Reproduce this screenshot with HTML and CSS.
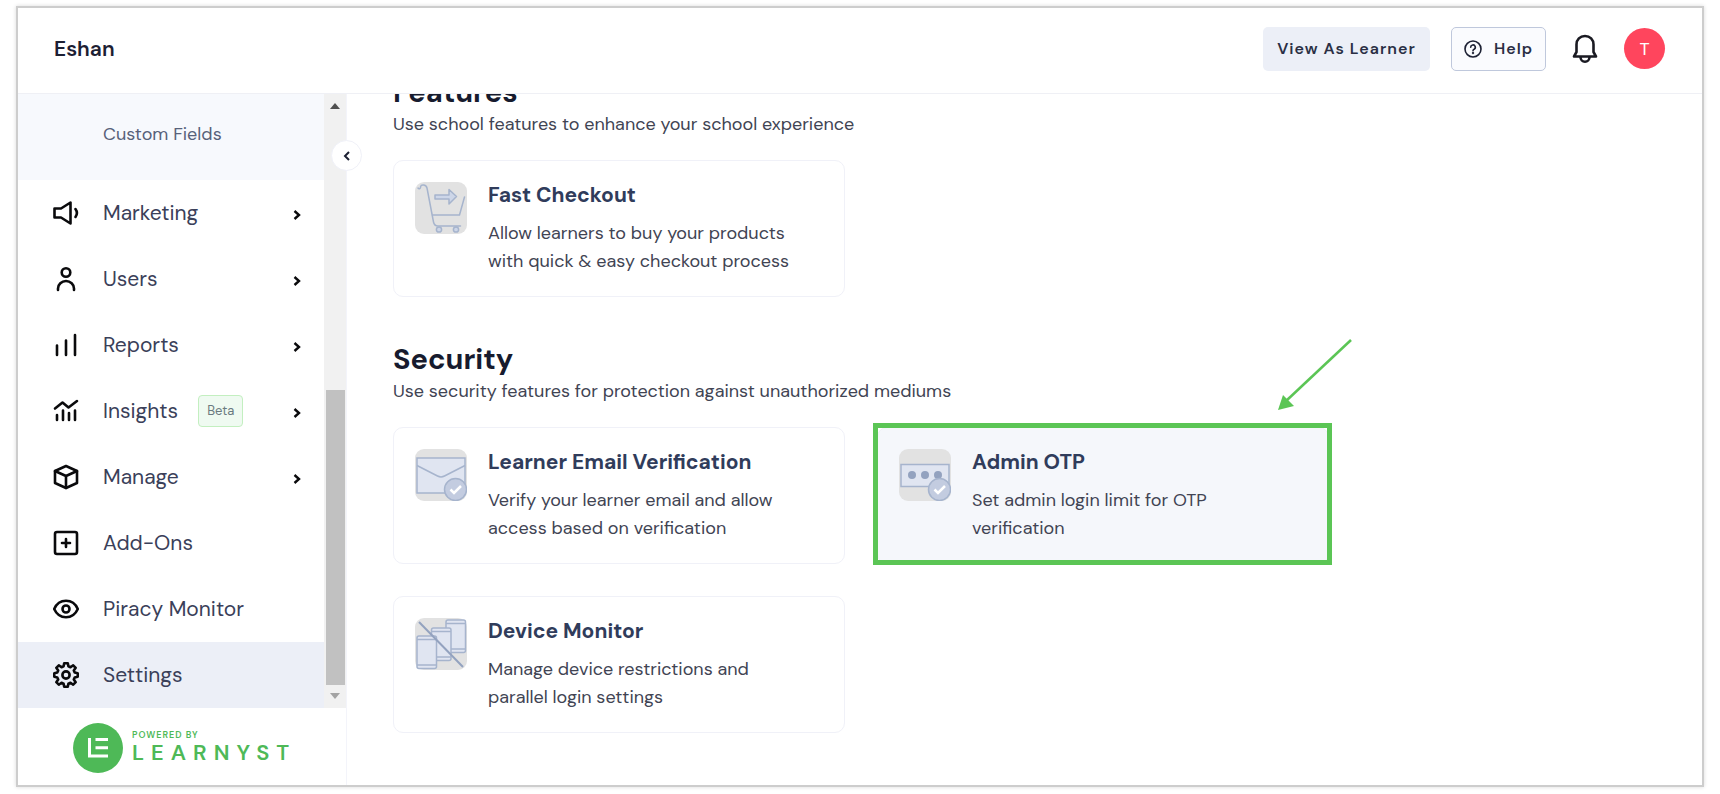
FILE: index.html
```html
<!DOCTYPE html>
<html lang="en">
<head>
    <meta charset="UTF-8">
    <meta name="viewport" content="width=device-width, initial-scale=1.0">
    <title>Settings - Learnyst</title>
    <link rel="stylesheet" href="styles.css">
</head>
<body>
    <div class="app">
        <!-- Top bar -->
        <header class="topbar">
            <div class="school-name">Eshan</div>
            <div class="topbar-actions">
                <button type="button" class="btn btn-view">View As Learner</button>
                <button type="button" class="btn btn-help">
                    <svg width="18" height="18" viewBox="0 0 18 18" fill="none" stroke="#1c2033" stroke-width="1.6" stroke-linecap="round">
                        <circle cx="9" cy="9" r="8"/>
                        <path d="M6.7 7.2a2.3 2.3 0 1 1 3.4 2c-.8.4-1.1.8-1.1 1.5"/>
                        <circle cx="9" cy="13" r=".4"/>
                    </svg>
                    Help
                </button>
                <button type="button" class="bell" aria-label="Notifications">
                    <svg width="26" height="30" viewBox="0 0 26 30" fill="none" stroke="#1a1a22" stroke-width="2.6" stroke-linejoin="round">
                        <path d="M13 2C8 2 4.500 5.500 4.500 10.500V18L2 22.500H24L21.500 18V10.500C21.500 5.500 18 2 13 2Z"/>
                        <path d="M8.500 23a4.500 4.800 0 0 0 9 0"/>
                    </svg>
                </button>
                <button type="button" class="avatar">T</button>
            </div>
        </header>

        <div class="layout">
            <!-- Sidebar -->
            <aside class="sidebar">
                <div class="sidebar-scroll">
                    <nav class="nav">
                        <a href="#" class="nav-sub">Custom Fields</a>
                        <a href="#" class="nav-item">
                            <svg class="nav-icon" viewBox="0 0 26 26">
                                <path d="M1.500 8.500H8L17.500 2.500V23.500L8 17.500H1.500Z"/>
                                <path d="M22.500 9c1.700 2.400 1.700 5.600 0 8"/>
                            </svg>
                            <span>Marketing</span>
                            <svg class="chevron" viewBox="0 0 8 10"><path d="M1.500 1L6 5L1.500 9"/></svg>
                        </a>
                        <a href="#" class="nav-item">
                            <svg class="nav-icon" viewBox="0 0 26 26">
                                <circle cx="13" cy="6.500" r="4.300"/>
                                <path d="M5 24v-1.500a8 7.500 0 0 1 16 0V24"/>
                            </svg>
                            <span>Users</span>
                            <svg class="chevron" viewBox="0 0 8 10"><path d="M1.500 1L6 5L1.500 9"/></svg>
                        </a>
                        <a href="#" class="nav-item">
                            <svg class="nav-icon" viewBox="0 0 26 26">
                                <path d="M4 13.500V23M13 8.500V23M22 3V23"/>
                            </svg>
                            <span>Reports</span>
                            <svg class="chevron" viewBox="0 0 8 10"><path d="M1.500 1L6 5L1.500 9"/></svg>
                        </a>
                        <a href="#" class="nav-item">
                            <svg class="nav-icon" viewBox="0 0 26 26">
                                <path d="M2 10.500L9.500 4.500L15.500 9.500L24 3"/>
                                <path d="M4 17V22M10 12.500V22M16 15V22M22 12.500V22"/>
                            </svg>
                            <span>Insights</span>
                            <span class="badge">Beta</span>
                            <svg class="chevron" viewBox="0 0 8 10"><path d="M1.500 1L6 5L1.500 9"/></svg>
                        </a>
                        <a href="#" class="nav-item">
                            <svg class="nav-icon" viewBox="0 0 26 26">
                                <path d="M13 2L24 7V19L13 24L2 19V7Z"/>
                                <path d="M2 7L13 12L24 7M13 12V24"/>
                            </svg>
                            <span>Manage</span>
                            <svg class="chevron" viewBox="0 0 8 10"><path d="M1.500 1L6 5L1.500 9"/></svg>
                        </a>
                        <a href="#" class="nav-item">
                            <svg class="nav-icon" viewBox="0 0 26 26">
                                <rect x="2" y="2" width="22" height="22" rx="2"/>
                                <path d="M13 9V17M9 13H17"/>
                            </svg>
                            <span>Add-Ons</span>
                        </a>
                        <a href="#" class="nav-item">
                            <svg class="nav-icon" viewBox="0 0 26 26">
                                <path d="M1.200 13C3.500 7.800 8 4.800 13 4.800S22.500 7.800 24.800 13C22.500 18.200 18 21.200 13 21.200S3.500 18.200 1.200 13Z"/>
                                <circle cx="13" cy="13" r="3.500"/>
                            </svg>
                            <span>Piracy Monitor</span>
                        </a>
                        <a href="#" class="nav-item active">
                            <svg class="nav-icon" viewBox="0 0 26 26">
                                <path d="M10.600 4.300L11.200 1.300H14.800L15.400 4.300L17.500 5.200L20.200 3.300L22.700 5.800L20.800 8.500L21.700 10.600L24.700 11.200V14.800L21.700 15.400L20.800 17.500L22.700 20.200L20.200 22.700L17.500 20.800L15.400 21.700L14.800 24.700H11.200L10.600 21.700L8.500 20.800L5.800 22.700L3.300 20.200L5.200 17.500L4.300 15.400L1.300 14.800V11.200L4.300 10.600L5.200 8.500L3.300 5.800L5.800 3.300L8.500 5.200Z"/>
                                <circle cx="13" cy="13" r="3.600"/>
                            </svg>
                            <span>Settings</span>
                        </a>
                    </nav>
                    <div class="scrollbar">
                        <svg width="10" height="6" viewBox="0 0 10 6"><path d="M5 0L10 6H0Z" fill="#505050"/></svg>
                        <div class="scroll-track"><div class="scroll-thumb"></div></div>
                        <svg width="10" height="6" viewBox="0 0 10 6"><path d="M0 0H10L5 6Z" fill="#a3a3a3"/></svg>
                    </div>
                </div>
                <button type="button" class="collapse" aria-label="Collapse menu">
                    <svg width="8" height="10" viewBox="0 0 8 10" fill="none" stroke="#1c2033" stroke-width="2"><path d="M6 1L2 5L6 9"/></svg>
                </button>
                <div class="powered">
                    <svg width="50" height="50" viewBox="0 0 50 50">
                        <circle cx="25" cy="25" r="25" fill="#4eb957"/>
                        <path d="M16.500 15V33H35M22.500 16.500H35M22.500 24.700H35" fill="none" stroke="#fff" stroke-width="3"/>
                    </svg>
                    <div class="powered-text">
                        <span class="powered-by">POWERED BY</span>
                        <span class="brand">LEARNYST</span>
                    </div>
                </div>
            </aside>

            <!-- Settings cards -->
            <main class="content">
                <section class="section">
                    <h2>Features</h2>
                    <p class="section-text">Use school features to enhance your school experience</p>
                    <div class="cards">
                        <a href="#" class="card">
                            <svg class="card-icon" viewBox="0 0 52 52">
                                <rect width="52" height="52" rx="9" fill="#e2e2e2"/>
                                <g fill="none" stroke="#a6b4cd" stroke-width="1.500" stroke-linecap="round" stroke-linejoin="round">
                                    <path d="M3 6C4 7.500 6 6.500 5.500 4.800C6 2.200 11 2.300 12 6L18.500 40C19 42.500 20.500 44 23 44H45.500"/>
                                    <path d="M17.500 33H44.500L49.500 15"/>
                                    <path d="M20 13H34V7.500L41.500 14.500L34 22V17H20Z" fill="#cdd6e8"/>
                                    <circle cx="24" cy="47.500" r="2.600" fill="#cdd6e8"/>
                                    <circle cx="41" cy="47.500" r="2.600" fill="#cdd6e8"/>
                                </g>
                            </svg>
                            <div class="card-body">
                                <h3>Fast Checkout</h3>
                                <p>Allow learners to buy your products<br>with quick &amp; easy checkout process</p>
                            </div>
                        </a>
                    </div>
                </section>

                <section class="section">
                    <h2>Security</h2>
                    <p class="section-text">Use security features for protection against unauthorized mediums</p>
                    <div class="cards">
                        <a href="#" class="card">
                            <svg class="card-icon" viewBox="0 0 52 52">
                                <rect width="52" height="52" rx="9" fill="#e2e2e2"/>
                                <g fill="#e0e5f1" stroke="#a6b4cd" stroke-width="1.500">
                                    <rect x="2" y="9" width="48" height="35"/>
                                    <path d="M2 16.500L22.500 27C25 28.300 27 28.300 29.500 27L50 16.500" fill="none"/>
                                    <circle cx="40.500" cy="40.500" r="11" fill="#c3cce0"/>
                                </g>
                                <path d="M35.500 40.500L39 44L46 37" fill="none" stroke="#fff" stroke-width="2.500"/>
                            </svg>
                            <div class="card-body">
                                <h3>Learner Email Verification</h3>
                                <p>Verify your learner email and allow<br>access based on verification</p>
                            </div>
                        </a>
                        <a href="#" class="card highlighted">
                            <svg class="card-icon" viewBox="0 0 52 52">
                                <rect width="52" height="52" rx="9" fill="#e2e2e2"/>
                                <rect x="2" y="15.500" width="48" height="22" fill="#e0e5f1" stroke="#a6b4cd" stroke-width="1.500"/>
                                <g fill="#93a2bf">
                                    <circle cx="13" cy="26" r="4"/>
                                    <circle cx="26" cy="26" r="4"/>
                                    <circle cx="39" cy="26" r="4"/>
                                </g>
                                <circle cx="40.500" cy="40.500" r="11" fill="#c3cce0" stroke="#a6b4cd" stroke-width="1.500"/>
                                <path d="M35.500 40.500L39 44L46 37" fill="none" stroke="#fff" stroke-width="2.500"/>
                            </svg>
                            <div class="card-body">
                                <h3>Admin OTP</h3>
                                <p>Set admin login limit for OTP<br>verification</p>
                            </div>
                            <svg class="arrow" width="76" height="74" viewBox="0 0 76 74">
                                <path d="M74 3L9 64" stroke="#5bc555" stroke-width="2.500"/>
                                <path d="M1 73L6 58L17 69Z" fill="#5bc555"/>
                            </svg>
                        </a>
                        <a href="#" class="card">
                            <svg class="card-icon" viewBox="0 0 52 52">
                                <rect width="52" height="52" rx="9" fill="#e2e2e2"/>
                                <g fill="#e0e5f1" stroke="#a6b4cd" stroke-width="1.500">
                                    <rect x="31" y="2" width="19.500" height="32.500" rx="2"/>
                                    <path d="M31 5.500H50.500M31 31H50.500"/>
                                    <rect x="16.500" y="10" width="19.500" height="32.500" rx="2"/>
                                    <path d="M16.500 13.500H36M16.500 39H36"/>
                                    <rect x="2" y="18" width="19.500" height="32.500" rx="2"/>
                                    <path d="M2 21.500H21.500M2 47H21.500"/>
                                </g>
                                <path d="M4 4L48 49" stroke="#93a2bf" stroke-width="2"/>
                            </svg>
                            <div class="card-body">
                                <h3>Device Monitor</h3>
                                <p>Manage device restrictions and<br>parallel login settings</p>
                            </div>
                        </a>
                    </div>
                </section>
            </main>
        </div>
    </div>
</body>
</html>
```
FILE: styles.css
```css
* {
    margin: 0;
    padding: 0;
    box-sizing: border-box;
}

body {
    font-family: 'DM Sans', Inter, sans-serif;
    font-optical-sizing: none;
    background: #fff;
    color: #414453;
    padding: 6px 16px;
}

a {
    color: inherit;
    text-decoration: none;
}

button {
    font-family: inherit;
    cursor: pointer;
}

.app {
    border: 2px solid #cdcdcd;
    box-shadow: 0 0 4px rgba(0, 0, 0, 0.15);
}

/* Top bar */
.topbar {
    display: flex;
    align-items: center;
    justify-content: space-between;
    height: 86px;
    padding: 0 37px 4px 36px;
    border-bottom: 1px solid #eff0f5;
}

.school-name {
    font-size: 21px;
    font-weight: 600;
    color: #1c2033;
}

.topbar-actions {
    display: flex;
    align-items: center;
    gap: 26px;
}

.btn {
    display: flex;
    align-items: center;
    justify-content: center;
    height: 44px;
    border-radius: 5px;
    font-size: 16px;
    font-weight: 600;
    letter-spacing: 1px;
    color: #2a2f45;
}

.btn-view {
    width: 167px;
    margin-right: -5px;
    border: none;
    background: #eceff7;
}

.btn-help {
    width: 95px;
    gap: 12px;
    border: 1px solid #bfc8dc;
    background: #fafbfe;
}

.bell {
    display: flex;
    border: none;
    background: none;
}

.avatar {
    width: 41px;
    height: 41px;
    border: none;
    border-radius: 50%;
    background: #ff455d;
    color: #fff;
    font-size: 18px;
}

.layout {
    display: flex;
}

/* Sidebar */
.sidebar {
    position: relative;
    flex: none;
    width: 329px;
    border-right: 1px solid #f3f4fa;
}

.sidebar-scroll {
    display: flex;
}

.nav {
    flex: 1;
}

.nav-sub {
    display: block;
    height: 86px;
    padding: 26px 0 0 85px;
    background: #f7f9fd;
    font-size: 18px;
    line-height: 28px;
    color: #57617a;
}

.nav-item {
    display: flex;
    align-items: center;
    height: 66px;
    padding: 0 23px 0 35px;
    font-size: 21px;
    color: #3a4059;
}

.nav-item.active {
    background: #eceff7;
}

.nav-icon {
    width: 26px;
    height: 26px;
    margin-right: 24px;
    fill: none;
    stroke: #0a0a0c;
    stroke-width: 2.6;
    stroke-linecap: round;
    stroke-linejoin: round;
}

.chevron {
    width: 8px;
    height: 10px;
    margin-top: 4px;
    margin-left: auto;
    fill: none;
    stroke: #0a0a0c;
    stroke-width: 2.4;
}

.badge {
    margin-left: 20px;
    padding: 0 8px;
    border: 1px solid #c3efc0;
    border-radius: 4px;
    background: #effaf1;
    font-size: 13px;
    line-height: 30px;
    color: #6b7a80;
}

.scrollbar {
    display: flex;
    flex-direction: column;
    align-items: center;
    gap: 8px;
    width: 22px;
    padding: 9px 0;
    background: #f1f1f1;
}

.scroll-track {
    display: flex;
    flex: 1;
    flex-direction: column;
    justify-content: flex-end;
}

.scroll-thumb {
    width: 19px;
    height: 52%;
    background: #c1c1c1;
}

.collapse {
    position: absolute;
    top: 46px;
    right: -16px;
    display: flex;
    align-items: center;
    justify-content: center;
    width: 31px;
    height: 31px;
    border: 1px solid #f0f1f8;
    border-radius: 50%;
    background: #fff;
}

.powered {
    display: flex;
    align-items: center;
    height: 77px;
    padding: 2px 0 0 55px;
    gap: 9px;
}

.powered-text {
    display: flex;
    flex-direction: column;
    font-weight: 600;
    color: #4eb957;
}

.powered-by {
    font-size: 9px;
    line-height: 10px;
    letter-spacing: 1px;
}

.brand {
    font-size: 22px;
    line-height: 26px;
    letter-spacing: 7px;
}

/* Main area, already scrolled a little */
.content {
    flex: 1;
    min-width: 0;
    overflow: hidden;
    padding-left: 46px;
}

.section {
    margin-bottom: 44px;
}

.section:first-child {
    margin-top: -20px;
}

.section h2 {
    font-size: 29px;
    line-height: 36px;
    font-weight: 700;
    color: #171b2e;
}

.section-text {
    margin-bottom: 22px;
    font-size: 18px;
    line-height: 28px;
}

.cards {
    display: grid;
    grid-template-columns: repeat(2, minmax(0, 452px));
    gap: 32px;
}

.card {
    position: relative;
    display: flex;
    gap: 21px;
    padding: 21px;
    border: 1px solid #f0f1f8;
    border-radius: 10px;
}

.card-icon {
    flex: none;
    width: 52px;
    height: 52px;
}

.card h3 {
    margin-bottom: 11px;
    font-size: 21px;
    line-height: 26px;
    font-weight: 700;
    color: #303c5b;
}

.card p {
    font-size: 18px;
    line-height: 28px;
}

/* Green frame and arrow on the Admin OTP card */
.highlighted {
    background: #f5f7fb;
}

.highlighted::after {
    content: '';
    position: absolute;
    inset: -5px -4px -2px -5px;
    border: 5px solid #5bc555;
}

.arrow {
    position: absolute;
    top: -91px;
    right: -25px;
}
```
